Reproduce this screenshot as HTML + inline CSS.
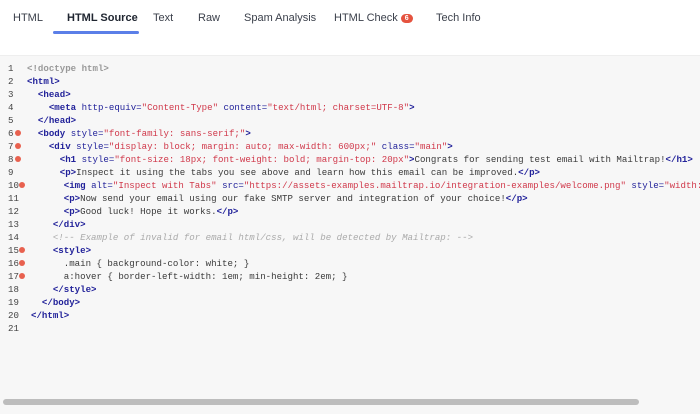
<!DOCTYPE html>
<html><head><style>
body{margin:0;width:700px;height:413px;background:#fff;font-family:"Liberation Sans",sans-serif;position:relative;overflow:hidden}
.tab{position:absolute;top:12px;font-size:11px;color:#3a3f4a}
.act{font-weight:bold;color:#1f2530}
.ul{position:absolute;left:53px;top:31px;width:86px;height:3px;background:#5b7fe8;border-radius:2px}
.badge{display:inline-block;background:#e5533f;color:#fff;font-size:7px;border-radius:5px;padding:1px 4px;vertical-align:1px;margin-left:3px;font-weight:bold}
.code{position:absolute;left:0;top:55px;width:700px;height:358px;background:#f7f7f7;border-top:1px solid #eee;overflow:hidden}
.ln{position:absolute;left:0;width:700px;height:13px;font-family:"Liberation Mono",monospace;font-size:9.1px;line-height:13px;white-space:pre;color:#3a3a3a;overflow:hidden}
.n{position:absolute;left:8px;color:#444}
.d{position:absolute;left:15px;top:3px;width:6px;height:6px;border-radius:50%;background:#e8614f}
.c{position:absolute;left:27px}
.t{color:#22229a;font-weight:bold}
.a{color:#22229a}
.s{color:#d0384a}
.cm{color:#aaa;font-style:italic}
.dt{color:#999;font-weight:bold}
.sb{position:absolute;left:3px;top:399px;width:636px;height:6px;border-radius:3px;background:#bdbdbd}
</style></head><body>
<div class="tab" style="left:13px">HTML</div>
<div class="tab act" style="left:67px">HTML Source</div>
<div class="tab" style="left:153px">Text</div>
<div class="tab" style="left:198px">Raw</div>
<div class="tab" style="left:244px">Spam Analysis</div>
<div class="tab" style="left:334px">HTML Check<span class="badge">6</span></div>
<div class="tab" style="left:436px">Tech Info</div>
<div class="ul"></div>
<div class="code">
<div class="ln" style="top:6px"><span class="n">1</span><span class="c"><span class="dt">&lt;!doctype html&gt;</span></span></div>
<div class="ln" style="top:19px"><span class="n">2</span><span class="c"><span class="t">&lt;html&gt;</span></span></div>
<div class="ln" style="top:32px"><span class="n">3</span><span class="c">  <span class="t">&lt;head&gt;</span></span></div>
<div class="ln" style="top:45px"><span class="n">4</span><span class="c">    <span class="t">&lt;meta</span> <span class="a">http-equiv=</span><span class="s">"Content-Type"</span> <span class="a">content=</span><span class="s">"text/html; charset=UTF-8"</span><span class="t">&gt;</span></span></div>
<div class="ln" style="top:58px"><span class="n">5</span><span class="c">  <span class="t">&lt;/head&gt;</span></span></div>
<div class="ln" style="top:71px"><span class="n">6</span><span class="d"></span><span class="c">  <span class="t">&lt;body</span> <span class="a">style=</span><span class="s">"font-family: sans-serif;"</span><span class="t">&gt;</span></span></div>
<div class="ln" style="top:84px"><span class="n">7</span><span class="d"></span><span class="c">    <span class="t">&lt;div</span> <span class="a">style=</span><span class="s">"display: block; margin: auto; max-width: 600px;"</span> <span class="a">class=</span><span class="s">"main"</span><span class="t">&gt;</span></span></div>
<div class="ln" style="top:97px"><span class="n">8</span><span class="d"></span><span class="c">      <span class="t">&lt;h1</span> <span class="a">style=</span><span class="s">"font-size: 18px; font-weight: bold; margin-top: 20px"</span><span class="t">&gt;</span>Congrats for sending test email with Mailtrap!<span class="t">&lt;/h1&gt;</span></span></div>
<div class="ln" style="top:110px"><span class="n">9</span><span class="c">      <span class="t">&lt;p&gt;</span>Inspect it using the tabs you see above and learn how this email can be improved.<span class="t">&lt;/p&gt;</span></span></div>
<div class="ln" style="top:123px"><span class="n">10</span><span class="d" style="left:19px"></span><span class="c" style="left:31px">      <span class="t">&lt;img</span> <span class="a">alt=</span><span class="s">"Inspect with Tabs"</span> <span class="a">src=</span><span class="s">"https://assets-examples.mailtrap.io/integration-examples/welcome.png"</span> <span class="a">style=</span><span class="s">"width: 100%;"</span></span></div>
<div class="ln" style="top:136px"><span class="n">11</span><span class="c" style="left:31px">      <span class="t">&lt;p&gt;</span>Now send your email using our fake SMTP server and integration of your choice!<span class="t">&lt;/p&gt;</span></span></div>
<div class="ln" style="top:149px"><span class="n">12</span><span class="c" style="left:31px">      <span class="t">&lt;p&gt;</span>Good luck! Hope it works.<span class="t">&lt;/p&gt;</span></span></div>
<div class="ln" style="top:162px"><span class="n">13</span><span class="c" style="left:31px">    <span class="t">&lt;/div&gt;</span></span></div>
<div class="ln" style="top:175px"><span class="n">14</span><span class="c" style="left:31px">    <span class="cm">&lt;!-- Example of invalid for email html/css, will be detected by Mailtrap: --&gt;</span></span></div>
<div class="ln" style="top:188px"><span class="n">15</span><span class="d" style="left:19px"></span><span class="c" style="left:31px">    <span class="t">&lt;style&gt;</span></span></div>
<div class="ln" style="top:201px"><span class="n">16</span><span class="d" style="left:19px"></span><span class="c" style="left:31px">      .main { background-color: white; }</span></div>
<div class="ln" style="top:214px"><span class="n">17</span><span class="d" style="left:19px"></span><span class="c" style="left:31px">      a:hover { border-left-width: 1em; min-height: 2em; }</span></div>
<div class="ln" style="top:227px"><span class="n">18</span><span class="c" style="left:31px">    <span class="t">&lt;/style&gt;</span></span></div>
<div class="ln" style="top:240px"><span class="n">19</span><span class="c" style="left:31px">  <span class="t">&lt;/body&gt;</span></span></div>
<div class="ln" style="top:253px"><span class="n">20</span><span class="c" style="left:31px"><span class="t">&lt;/html&gt;</span></span></div>
<div class="ln" style="top:266px"><span class="n">21</span></div>
</div>
<div class="sb"></div>
</body></html>
